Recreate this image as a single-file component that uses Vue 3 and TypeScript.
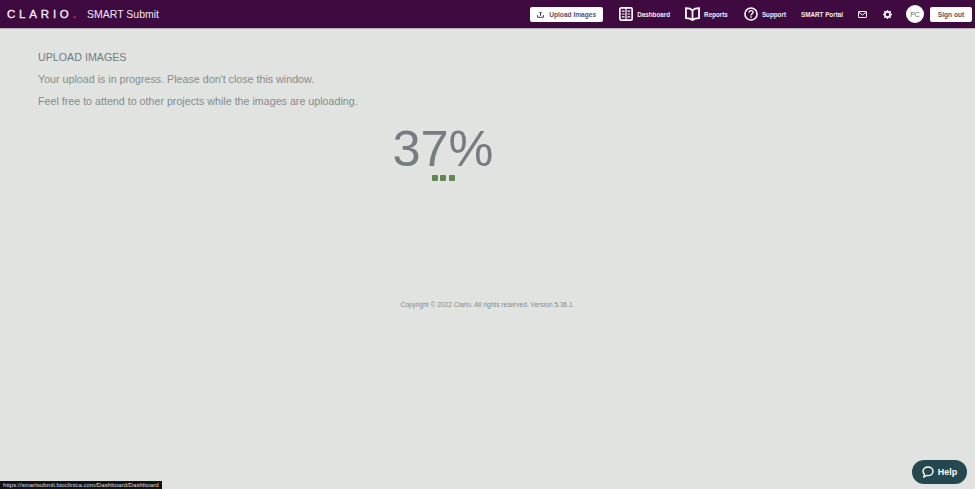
<script setup lang="ts">
const progress = 37
</script>

<template>
  <div class="page">
    <header class="topbar">
      <div class="brand">
        <span class="logo">CLARIO<i>.</i></span>
        <span class="product">SMART Submit</span>
      </div>
      <nav class="nav">
        <button class="btn upload">
          <svg width="7" height="7" viewBox="0 0 10 10" fill="none" stroke="#4a3a50" stroke-width="1.400">
            <path d="M.8 6v3h8.400V6M5 7V1.500M3.200 3.200 5 1.300l1.800 1.900" />
          </svg>
          Upload Images
        </button>
        <a class="link dash">
          <svg width="14" height="14" viewBox="0 0 15 15">
            <rect x=".9" y=".9" width="13.200" height="13.200" rx="1.500" fill="none" stroke="#fff" stroke-width="1.800" />
            <path d="M7.500 1v13M3 4.500h3M3 7.500h3M3 10.500h3M9 4.500h3M9 7.500h3M9 10.500h3" stroke="#fff" stroke-width="1.300" />
          </svg>
          Dashboard
        </a>
        <a class="link reports">
          <svg width="15" height="14" viewBox="0 0 16 15" fill="none" stroke="#fff" stroke-width="1.900">
            <path d="M8 3.500C6.500 2 4 1.300 1 1.300v10.500c3 0 5.500.7 7 2.200 1.500-1.500 4-2.200 7-2.200V1.300c-3 0-5.500.7-7 2.200ZM8 3.500V14" />
          </svg>
          Reports
        </a>
        <a class="link support">
          <svg width="14" height="14" viewBox="0 0 15 15" fill="none" stroke="#fff">
            <circle cx="7.500" cy="7.500" r="6.500" stroke-width="1.700" />
            <path d="M5.500 5.800c0-2.600 4.200-2.600 4.200-.1 0 1.700-2.200 1.600-2.200 3.300" stroke-width="1.400" />
            <path d="M7.500 10v1.400" stroke-width="1.400" />
          </svg>
          Support
        </a>
        <a class="link portal">SMART Portal</a>
        <svg class="mail" width="9" height="7" viewBox="0 0 9 7" fill="none" stroke="#fff">
          <rect x=".5" y=".5" width="8" height="6" rx=".6" />
          <path d="M.8 1.200 4.500 4l3.700-2.800" />
        </svg>
        <svg class="gear" width="9" height="9" viewBox="0 0 10 10">
          <circle cx="5" cy="5" r="2.900" fill="none" stroke="#fff" stroke-width="1.800" />
          <path d="M5 0v2M5 8v2M0 5h2M8 5h2M1.500 1.500 3 3M7 7l1.500 1.500M8.500 1.500 7 3M3 7 1.500 8.500" stroke="#fff" stroke-width="1.600" />
        </svg>
        <span class="avatar">PC</span>
        <button class="btn signout">Sign out</button>
      </nav>
    </header>

    <main class="content">
      <h1>UPLOAD IMAGES</h1>
      <p>Your upload is in progress. Please don't close this window.</p>
      <p>Feel free to attend to other projects while the images are uploading.</p>
      <div class="meter">
        <div class="progress">{{ progress }}%</div>
        <div class="dots"><span></span><span></span><span></span></div>
      </div>
      <footer>Copyright © 2022 Clario. All rights reserved. Version 5.36.1.</footer>
    </main>

    <div class="status">https://smartsubmit.bioclinica.com/Dashboard/Dashboard</div>
    <button class="help">
      <svg width="12" height="12" viewBox="0 0 12 12" fill="none" stroke="#fff" stroke-width="1.400">
        <path d="M6 1C3.200 1 1 2.900 1 5.300c0 1.200.5 2.200 1.400 3L2 11l2.500-1.500c.5.100 1 .1 1.500.1 2.800 0 5-1.900 5-4.300S8.800 1 6 1Z" />
      </svg>
      Help
    </button>
  </div>
</template>

<style>
html,body{margin:0;background:#e1e3e0}
</style>

<style scoped>
.page{position:relative;height:489px;overflow:hidden;background:#e1e3e0;font-family:"Liberation Sans",Arial,sans-serif;color:#7b8186}
.topbar{height:28px;border-bottom:1px solid #b9b4ba;background:#3f0a40;display:flex;align-items:center;justify-content:space-between;color:#fff}
.brand{display:flex;align-items:center;margin-left:7px}
.logo{font-size:11.500px;letter-spacing:3.800px;width:80px;color:#f4f1f4;white-space:nowrap;-webkit-text-stroke:.3px #f4f1f4}
.logo i{color:#d4136f;font-style:normal;font-weight:700;-webkit-text-stroke:.4px #d4136f}
.product{font-size:10.500px;color:#eee8ee}
.nav{display:flex;align-items:center;margin-right:3px}
button{font-family:inherit;border:0;padding:0}
.btn{height:15px;border-radius:2px;background:#fff;color:#5d5166;font-size:6.600px;font-weight:700;display:flex;align-items:center;justify-content:center}
.upload{width:73px;gap:5px;margin-right:16px}
.link{display:flex;align-items:center;gap:4px;color:#f0ecf0;font-size:6.300px;font-weight:700}
.dash{margin-right:15px}
.reports{margin-right:16px}
.support{margin-right:15px}
.portal{margin-right:15px}
.mail{margin-right:16px}
.gear{margin-right:14px}
.avatar{width:18px;height:18px;border-radius:50%;background:#fff;color:#6b6b70;font-size:7px;display:flex;align-items:center;justify-content:center;margin-right:6px}
.signout{width:42px}
.content{padding:0 38px}
h1{margin:21px 0 0;font-size:10.700px;line-height:14px;font-weight:400;color:#6f7a84}
p{margin:8px 0 0;font-size:10.700px;line-height:14px;color:#868b8d}
.meter{margin:12px 51px 0 -38px;display:flex;flex-direction:column;align-items:center}
.progress{font-size:50.500px;line-height:58px;color:#767c82}
.dots{display:flex;gap:2.500px;margin-top:-3px}
.dots span{width:6px;height:6px;background:#638552;border-radius:1px}
footer{margin:120px -38px 0;text-align:center;font-size:6.600px;line-height:8px;color:#85898b}
.status{position:absolute;left:0;bottom:0;height:8px;line-height:8px;padding:0 3px;background:#111;color:#d9dde6;font-size:6.150px;white-space:nowrap}
.help{position:absolute;left:912px;top:460px;width:55px;height:24px;border-radius:12px;background:#25474f;color:#fff;font-size:9px;font-weight:700;display:flex;align-items:center;justify-content:center;gap:4px}
</style>
